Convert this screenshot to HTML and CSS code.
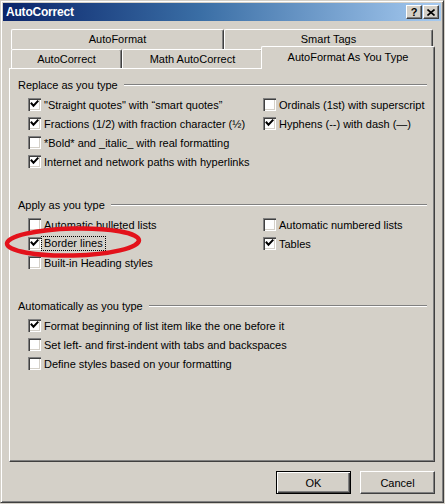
FILE: index.html
```html
<!DOCTYPE html>
<html>
<head>
<meta charset="utf-8">
<link rel="stylesheet" href="styles.css">
</head>
<body>
<div class="window">
  <div class="titlebar">
    <span class="title">AutoCorrect</span>
    <div class="caption-btns">
      <span class="cap-btn help">?</span>
      <span class="cap-btn close">
        <svg width="8" height="7" viewBox="0 0 8 7"><path d="M0.5 0.5 L7.5 6.5 M7.5 0.5 L0.5 6.5" stroke="#000" stroke-width="1.6" fill="none"/></svg>
      </span>
    </div>
  </div>

  <div class="tabs">
    <div class="tab-row back">
      <div class="tab t-autoformat">AutoFormat</div>
      <div class="tab t-smart">Smart Tags</div>
    </div>
    <div class="tab-row front">
      <div class="tab t-autocorrect">AutoCorrect</div>
      <div class="tab t-math">Math AutoCorrect</div>
      <div class="tab active">AutoFormat As You Type</div>
    </div>
  </div>

  <div class="panel">
    <section class="group">
      <div class="legend"><span>Replace as you type</span><i class="rule"></i></div>
      <div class="cols">
        <div class="col left">
          <div class="row"><span class="cb on"><svg viewBox="0 0 13 13"><path d="M3.5 5.5 L5.5 7.8 L9.6 3.4" /></svg></span><span class="lbl">"Straight quotes" with “smart quotes”</span></div>
          <div class="row"><span class="cb on"><svg viewBox="0 0 13 13"><path d="M3.5 5.5 L5.5 7.8 L9.6 3.4" /></svg></span><span class="lbl">Fractions (1/2) with fraction character (½)</span></div>
          <div class="row"><span class="cb"></span><span class="lbl">*Bold* and _italic_ with real formatting</span></div>
          <div class="row"><span class="cb on"><svg viewBox="0 0 13 13"><path d="M3.5 5.5 L5.5 7.8 L9.6 3.4" /></svg></span><span class="lbl">Internet and network paths with hyperlinks</span></div>
        </div>
        <div class="col right">
          <div class="row"><span class="cb"></span><span class="lbl">Ordinals (1st) with superscript</span></div>
          <div class="row"><span class="cb on"><svg viewBox="0 0 13 13"><path d="M3.5 5.5 L5.5 7.8 L9.6 3.4" /></svg></span><span class="lbl">Hyphens (--) with dash (—)</span></div>
        </div>
      </div>
    </section>

    <section class="group">
      <div class="legend"><span>Apply as you type</span><i class="rule"></i></div>
      <div class="cols">
        <div class="col left">
          <div class="row"><span class="cb"></span><span class="lbl">Automatic bulleted lists</span></div>
          <div class="row"><span class="cb on"><svg viewBox="0 0 13 13"><path d="M3.5 5.5 L5.5 7.8 L9.6 3.4" /></svg></span><span class="lbl focus">Border lines</span></div>
          <div class="row"><span class="cb"></span><span class="lbl">Built-in Heading styles</span></div>
        </div>
        <div class="col right">
          <div class="row"><span class="cb"></span><span class="lbl">Automatic numbered lists</span></div>
          <div class="row"><span class="cb on"><svg viewBox="0 0 13 13"><path d="M3.5 5.5 L5.5 7.8 L9.6 3.4" /></svg></span><span class="lbl">Tables</span></div>
        </div>
      </div>
    </section>

    <section class="group">
      <div class="legend"><span>Automatically as you type</span><i class="rule"></i></div>
      <div class="cols">
        <div class="col wide">
          <div class="row"><span class="cb on"><svg viewBox="0 0 13 13"><path d="M3.5 5.5 L5.5 7.8 L9.6 3.4" /></svg></span><span class="lbl">Format beginning of list item like the one before it</span></div>
          <div class="row"><span class="cb"></span><span class="lbl">Set left- and first-indent with tabs and backspaces</span></div>
          <div class="row"><span class="cb"></span><span class="lbl">Define styles based on your formatting</span></div>
        </div>
      </div>
    </section>
  </div>

  <div class="buttons">
    <button class="btn default">OK</button>
    <button class="btn">Cancel</button>
  </div>
</div>

<svg class="annotation" width="160" height="50" viewBox="0 0 160 50">
  <ellipse cx="73" cy="22" rx="66" ry="13.5" transform="rotate(-1.5 73 22)" />
</svg>
</body>
</html>
```

FILE: styles.css
```css
* { box-sizing: border-box; }

html, body {
  margin: 0;
  padding: 0;
}

body {
  width: 445px;
  height: 504px;
  background: #d4d0c8;
  font-family: "Liberation Sans", Arial, sans-serif;
  font-size: 11px;
  color: #000;
  position: relative;
  overflow: hidden;
}

.window {
  width: 444px;
  height: 503px;
  background: #d4d0c8;
  border-top: 1px solid #d4d0c8;
  border-left: 1px solid #d4d0c8;
  border-right: 1px solid #404040;
  border-bottom: 1px solid #404040;
  box-shadow: inset 1px 1px #ffffff, inset -1px -1px #808080;
  padding: 2px;
}

/* Title bar */
.titlebar {
  height: 18px;
  background: linear-gradient(to right, #0a246a 0%, #3a6ea5 45%, #a6caf0 100%);
  display: flex;
  align-items: center;
  justify-content: space-between;
  padding: 0 2px 0 3px;
}

.title {
  color: #fff;
  font-weight: bold;
  font-size: 12px;
  letter-spacing: -0.2px;
}

.caption-btns {
  display: flex;
  gap: 1px;
}

.cap-btn {
  width: 16px;
  height: 14px;
  background: #d4d0c8;
  border-top: 1px solid #fff;
  border-left: 1px solid #fff;
  border-right: 1px solid #404040;
  border-bottom: 1px solid #404040;
  box-shadow: inset -1px -1px #808080;
  display: flex;
  align-items: center;
  justify-content: center;
  font-weight: bold;
  font-size: 11px;
  line-height: 1;
}

.cap-btn svg { display: block; }

/* Tabs */
.tabs {
  margin-top: 8px;
  padding-left: 8px;
  width: 430px;
}

.tab-row {
  display: flex;
  width: 422px;
}

.tab-row.back { height: 20px; }

.tab-row.front {
  height: 19px;
  align-items: flex-end;
}

.tab {
  background: #d4d0c8;
  border-top: 1px solid #fff;
  border-left: 1px solid #fff;
  border-right: 1px solid #404040;
  box-shadow: inset -1px 0 #808080;
  border-radius: 2px 2px 0 0;
  text-align: center;
  white-space: nowrap;
}

.back .tab { height: 20px; line-height: 19px; }
.front .tab { height: 19px; line-height: 18px; }

.t-autoformat { width: 213px; }
.t-smart { flex: 1; }
.t-autocorrect { width: 111px; }
.t-math { width: 141px; }

.front .tab.active {
  flex: 1;
  height: 23px;
  line-height: 21px;
  margin: 0 -2px -1px -2px;
  position: relative;
  z-index: 2;
}

/* Panel */
.panel {
  position: relative;
  z-index: 1;
  margin-left: 6px;
  width: 426px;
  height: 394px;
  border-top: 1px solid #fff;
  border-left: 1px solid #fff;
  border-right: 1px solid #404040;
  border-bottom: 1px solid #404040;
  box-shadow: inset -1px -1px #808080;
  padding: 6px 7px 0 8px;
}

.group { margin-bottom: 24px; }

.legend {
  height: 20px;
  display: flex;
  align-items: center;
}

.rule {
  flex: 1;
  height: 2px;
  border-top: 1px solid #808080;
  border-bottom: 1px solid #fff;
  margin-left: 6px;
}

.cols {
  display: flex;
  padding-left: 10px;
}

.col.left { width: 235px; }
.col.wide { flex: 1; }

.row {
  height: 19px;
  display: flex;
  align-items: center;
  gap: 3px;
  white-space: nowrap;
}

.cb {
  flex: none;
  width: 13px;
  height: 13px;
  background: #fff;
  box-shadow:
    inset 1px 1px #808080,
    inset 2px 2px #404040,
    inset -1px -1px #ffffff,
    inset -2px -2px #d4d0c8;
}

.cb svg {
  display: block;
  width: 13px;
  height: 13px;
}

.cb svg path {
  fill: none;
  stroke: #000;
  stroke-width: 2;
  stroke-linecap: square;
  stroke-linejoin: miter;
}

.lbl.focus {
  margin-left: -3px;
  padding: 0 2px;
  border: 1px dotted #000;
  line-height: 13px;
}

/* Buttons */
.buttons {
  margin-left: 6px;
  width: 426px;
  margin-top: 9px;
  display: flex;
  justify-content: flex-end;
  gap: 9px;
}

.btn {
  width: 75px;
  height: 23px;
  margin: 0;
  padding: 0;
  background: #d4d0c8;
  font-family: "Liberation Sans", Arial, sans-serif;
  font-size: 11px;
  color: #000;
  border-top: 1px solid #fff;
  border-left: 1px solid #fff;
  border-right: 1px solid #404040;
  border-bottom: 1px solid #404040;
  box-shadow: inset -1px -1px #808080;
}

.btn.default {
  border: 1px solid #000;
  box-shadow: inset 1px 1px #fff, inset -1px -1px #404040, inset -2px -2px #808080;
}

/* Red annotation ellipse drawn over the dialog */
.annotation {
  position: absolute;
  left: 0;
  top: 220px;
  z-index: 10;
  overflow: visible;
}

.annotation ellipse {
  fill: none;
  stroke: #e3121b;
  stroke-width: 4.5;
}
```
